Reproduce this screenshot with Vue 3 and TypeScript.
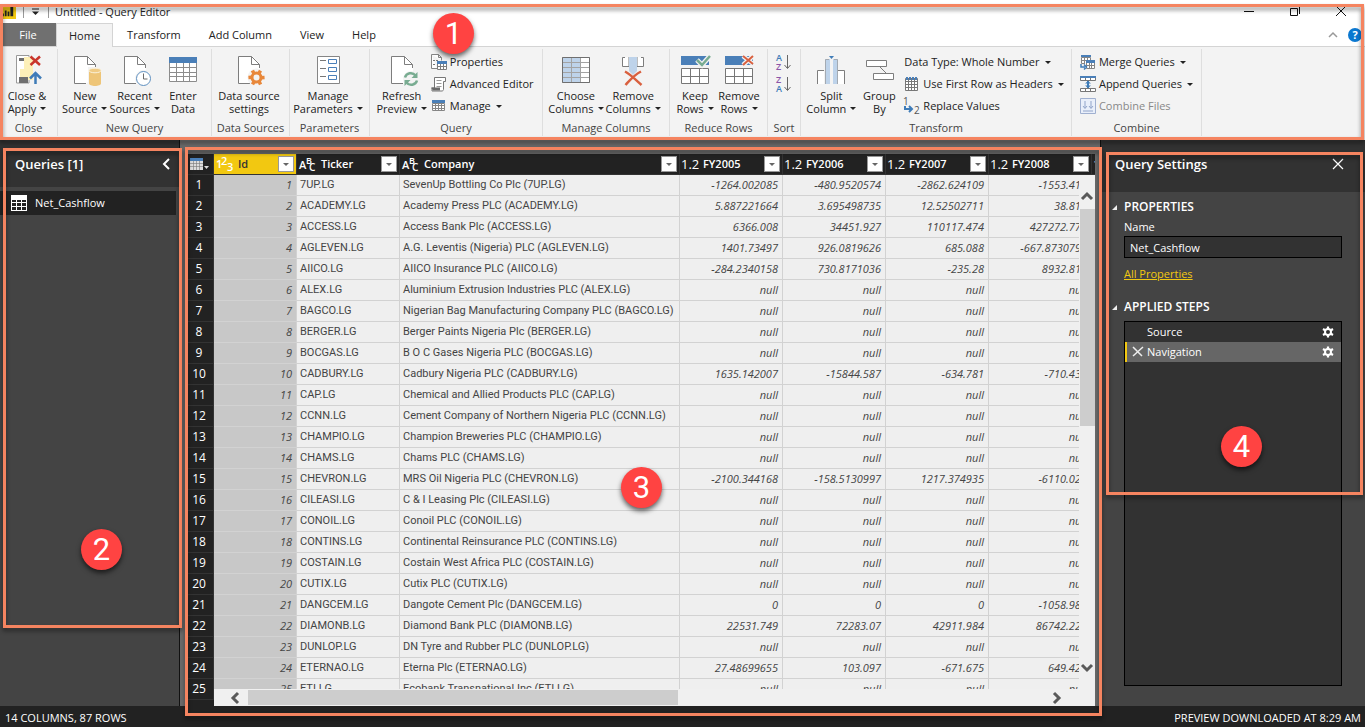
<script setup lang="ts">
import { ref } from 'vue'

interface Command { icon: string; lines: string[]; menu?: boolean; disabled?: boolean }
interface Group { key: string; label: string; large: Command[]; small?: Command[] }

const doc = '<path d="M18.5 2.5H5.5V29.5H17M18.5 2.5L26.5 10.5V14M18.5 2.5V10.5H26.5" fill="none" stroke="#7d7d7d"/>'
const docFill = '<path d="M5 2H19L27 10V20L17 30H5Z" fill="#fff"/>'
const cells = (x: number, y: number, w: number, h: number, cols: number, rows: number, color: string): string => {
  let d = `M${x} ${y}h${w}v${h}h${-w}z`
  for (let i = 1; i < cols; i++) d += `M${x + Math.round((w * i) / cols)} ${y}v${h}`
  for (let i = 1; i < rows; i++) d += `M${x} ${y + Math.round((h * i) / rows)}h${w}`
  return `<path d="${d}" fill="none" stroke="${color}"/>`
}

const icons: Record<string, string> = {
  close: '<path d="M5.5 1.5H18V29H5.5Z" fill="#fff" stroke="#999"/><path d="M13 3h9v23h-13v-11h4z" fill="#fdf0b8"/><path d="M8 4h5v3H8zM8 23h9v6H8z" fill="#6f6f6f"/><path d="M19.5 2.5L29 11M29 2.5L19.5 11" stroke="#c9352b" stroke-width="2.5" fill="none"/><path d="M24.5 30V20M19 24.5L24.5 19L30 24.5" stroke="#3f7cb8" stroke-width="2.5" fill="none"/>',
  newSource: docFill + doc + '<path d="M19 13h14v20H19z" fill="#f3f3f3"/><path d="M20 16.5v13c0 3.3 12 3.3 12 0v-13z" fill="#eec578"/><ellipse cx="26" cy="16.5" rx="6" ry="2.3" fill="#f0cb85" stroke="#fbf2dc"/>',
  recent: docFill + doc + '<circle cx="24.5" cy="24.5" r="8.5" fill="#f3f3f3"/><circle cx="24.5" cy="24.5" r="7" fill="#fff" stroke="#5f90c0"/><path d="M24.5 19.5V25H28.5" fill="none" stroke="#6b6b6b"/>',
  enter: '<path d="M2 8h28v20H2z" fill="#fff"/>' + cells(2.5, 8.5, 27, 19, 4, 4, '#8c8c8c') + '<path d="M2 3h28v6H2z" fill="#4a7fb8"/>',
  sourceSettings: docFill + doc + '<circle cx="23.5" cy="23.5" r="9" fill="#f3f3f3"/><g stroke="#e8873a" fill="none"><circle cx="23.5" cy="23.5" r="4.5" stroke-width="3"/><path d="M23.5 19v-3.5M23.5 28v3.5M19.5 21.5l-3-2M27.5 21.5l3-2M19.5 25.5l-3 2M27.5 25.5l3 2" stroke-width="3.5" transform="rotate(30 23.5 23.5)"/></g>',
  params: '<path d="M5.5 2.5h22v27h-22z" fill="#fff" stroke="#858585"/><path d="M8 6.5h6M8 14.5h6M8 22.5h6" stroke="#777"/><path d="M16.5 5.5h8v4h-8zM16.5 13.5h8v4h-8zM16.5 21.5h8v4h-8z" fill="#fff" stroke="#4a7fb8"/>',
  refresh: docFill + doc + '<circle cx="25" cy="25" r="8" fill="#f3f3f3"/><g fill="none" stroke="#78ac91" stroke-width="2.5"><path d="M19 23.5A6 6 0 0 1 29.5 21.5M31 26.5A6 6 0 0 1 20.5 28.5"/></g><path d="M31.5 18v6h-6zM18.5 32v-6h6z" fill="#78ac91"/>',
  choose: '<path d="M2 3h28v26H2z" fill="#fff"/><path d="M3 4h18v24H3z" fill="#bed3ea"/>' + cells(2.5, 3.5, 27, 25, 3, 5, '#a3a3a3') + '<path d="M2.5 3.5h27v25h-27z" fill="none" stroke="#6f6f6f"/>',
  removeCols: '<path d="M8 3.500H5.500V12.500H12V3M24 3.500H26.500V12.500H20V3" stroke="#7d7d7d" fill="#fff"/><path d="M12 3h8v14l-4 4-4-4z" fill="#bed3ea"/><path d="M8 17.5C13 20 19 26 24.5 31M24 17.5C17 21 13 26 8.5 31" stroke="#d9603f" stroke-width="2.5" fill="none"/>',
  keepRows: '<path d="M2 2h28v9H2z" fill="#4a7fb8"/><path d="M2.5 14.5h27v15h-27z" fill="#fff"/>' + cells(2.5, 14.5, 27, 15, 3, 2, '#777') + '<path d="M18 6l5 5 8-9" stroke="#f3f3f3" stroke-width="5" fill="none"/><path d="M18 6l5 5 8-9" stroke="#78ac91" stroke-width="2.5" fill="none"/>',
  removeRows: '<path d="M2 2h28v9H2z" fill="#4a7fb8"/><path d="M2.5 14.5h27v15h-27z" fill="#fff"/>' + cells(2.5, 14.5, 27, 15, 3, 2, '#777') + '<path d="M20 2l10 8M30 2l-10 9" stroke="#f3f3f3" stroke-width="4.5"/><path d="M20 2l10 8M30 2l-10 9" stroke="#d9603f" stroke-width="2"/>',
  split: '<path d="M2.5 30V16.5H9V30M29.5 30V16.500H23V30" fill="#fff"/><path d="M2.5 30V16.5H9M29.5 30V16.5H23" fill="none" stroke="#7d7d7d"/><path d="M10 5h5v25h-5zM18 5h5v25h-5z" fill="#bed3ea"/><path d="M10.5 30V5.5H14M22.5 30V5.5H19" fill="none" stroke="#a3aab2"/><path d="M14 2h5l-2.5 3z" fill="#3f7cb8"/>',
  group: '<path d="M3.5 6.5h20v6h-20zM10.5 19.5h20v6h-20z" fill="#fff" stroke="#7d7d7d"/><path d="M17 13l6 6" stroke="#7d7d7d"/>',
  properties: '<path d="M.5 .5h7l3 3v3M.5 .5v14H6M7.5 .5v3h3" fill="#fff" stroke="#858585"/><path d="M2 6.5h2M2 10.5h2M5 6.5h2" stroke="#777"/><path d="M6 8h10v8H6z" fill="#fff"/>' + cells(6.5, 9.5, 9, 6, 3, 2, '#7d7d7d') + '<path d="M6 7h10v3H6z" fill="#4a7fb8"/>',
  advanced: '<path d="M3.5 1.5h11v4h-2v8c0 1-1 1.5-1.5 1.5h-10v-3h2.5z" fill="#fff" stroke="#777"/><path d="M5.5 4.5h5M5.5 7.5h5M5.5 10.5h5" stroke="#999"/><path d="M0 11.5h9v3H2z" fill="#6a6a6a"/>',
  table: '<path d="M1 2h13v11H1z" fill="#fff"/>' + cells(1.5, 5.5, 12, 7, 4, 3, '#858585') + '<path d="M1 2h13v3H1z" fill="#4a7fb8"/>',
  headers: '<path d="M1.5 2.5h12v12h-12z" fill="#fff"/>' + cells(1.5, 2.5, 12, 12, 4, 4, '#777') + '<path d="M2 1h2v3H2zM5 1h2v3H5zM8 1h2v3H8zM11 1h2v3h-2z" fill="#4a7fb8"/>',
  replace: '<text x="-1" y="7" font-size="10" fill="#555">1</text><text x="10" y="16" font-size="10" fill="#555">2</text><path d="M1 8v3h6M5 8l3 3-3 3" fill="none" stroke="#3f7cb8" stroke-width="2"/>',
  merge: '<path d="M1 2h10v8H1z" fill="#fff"/>' + cells(1.5, 3.5, 9, 6, 3, 2, '#858585') + '<path d="M1 1h10v2H1z" fill="#4a7fb8"/><path d="M5 7h10v8H5z" fill="#fff"/>' + cells(6.5, 8.5, 8, 6, 3, 2, '#858585') + '<path d="M6 6h9v3H6z" fill="#4a7fb8"/><path d="M1 10v3h4M4 10.5l2.5 2.5L4 15.5" fill="none" stroke="#3f7cb8" stroke-width="1.5"/>',
  append: '<path d="M.5 .5h15v4H.5zM.5 12.5h15v3H.5z" fill="#fff" stroke="#777"/><path d="M5.5 1v3M10.5 1v3M5.5 13v2M10.5 13v2" stroke="#777"/><path d="M0 0h16v2H0z" fill="#4a7fb8"/><path d="M8 5v7" stroke="#3f7cb8" stroke-width="2"/><path d="M5 7.5h6L8 5zM5 9.5h6L8 12z" fill="#3f7cb8"/>',
  combine: '<path d="M.5 .5h15v15H.5z" fill="#e9effa" stroke="#a0b0d0"/><path d="M5 3v7M11 3v7M3 8l2 2.5L7 8M9 8l2 2.5L13 8M3 13h10" fill="none" stroke="#91a4c9"/>',
  az: '<text x="0" y="7" font-size="9" font-weight="600" fill="#3f7cb8">A</text><text x="0" y="16" font-size="9" font-weight="600" fill="#8b55a8">Z</text><path d="M11.5 1v13M8.5 11l3 3.5 3-3.5" fill="none" stroke="#666"/>',
  za: '<text x="0" y="7" font-size="9" font-weight="600" fill="#8b55a8">Z</text><text x="0" y="16" font-size="9" font-weight="600" fill="#3f7cb8">A</text><path d="M11.5 1v13M8.5 11l3 3.5 3-3.5" fill="none" stroke="#666"/>',
}

const groups: Group[] = [
  { key: 'close', label: 'Close', large: [{ icon: 'close', lines: ['Close &', 'Apply'], menu: true }] },
  { key: 'new', label: 'New Query', large: [
    { icon: 'newSource', lines: ['New', 'Source'], menu: true },
    { icon: 'recent', lines: ['Recent', 'Sources'], menu: true },
    { icon: 'enter', lines: ['Enter', 'Data'] } ] },
  { key: 'sources', label: 'Data Sources', large: [{ icon: 'sourceSettings', lines: ['Data source', 'settings'] }] },
  { key: 'params', label: 'Parameters', large: [{ icon: 'params', lines: ['Manage', 'Parameters'], menu: true }] },
  { key: 'query', label: 'Query', large: [{ icon: 'refresh', lines: ['Refresh', 'Preview'], menu: true }], small: [
    { icon: 'properties', lines: ['Properties'] },
    { icon: 'advanced', lines: ['Advanced Editor'] },
    { icon: 'table', lines: ['Manage'], menu: true } ] },
  { key: 'columns', label: 'Manage Columns', large: [
    { icon: 'choose', lines: ['Choose', 'Columns'], menu: true },
    { icon: 'removeCols', lines: ['Remove', 'Columns'], menu: true } ] },
  { key: 'rows', label: 'Reduce Rows', large: [
    { icon: 'keepRows', lines: ['Keep', 'Rows'], menu: true },
    { icon: 'removeRows', lines: ['Remove', 'Rows'], menu: true } ] },
  { key: 'sort', label: 'Sort', large: [], small: [{ icon: 'az', lines: [] }, { icon: 'za', lines: [] }] },
  { key: 'transform', label: 'Transform', large: [
    { icon: 'split', lines: ['Split', 'Column'], menu: true },
    { icon: 'group', lines: ['Group', 'By'] } ], small: [
    { icon: '', lines: ['Data Type: Whole Number'], menu: true },
    { icon: 'headers', lines: ['Use First Row as Headers'], menu: true },
    { icon: 'replace', lines: ['Replace Values'] } ] },
  { key: 'combine', label: 'Combine', large: [], small: [
    { icon: 'merge', lines: ['Merge Queries'], menu: true },
    { icon: 'append', lines: ['Append Queries'], menu: true },
    { icon: 'combine', lines: ['Combine Files'], disabled: true } ] },
]

const tabs = ['File', 'Home', 'Transform', 'Add Column', 'View', 'Help']
const activeTab = ref('Home')

const columns = [
  { name: 'Id', type: 'int' }, { name: 'Ticker', type: 'text' }, { name: 'Company', type: 'text' },
  { name: 'FY2005', type: 'num' }, { name: 'FY2006', type: 'num' }, { name: 'FY2007', type: 'num' },
  { name: 'FY2008', type: 'num' },
]

const n = 'null'
const rows: string[][] = [
  ['7UP.LG', 'SevenUp Bottling Co Plc (7UP.LG)', '-1264.002085', '-480.9520574', '-2862.624109', '-1553.413'],
  ['ACADEMY.LG', 'Academy Press PLC (ACADEMY.LG)', '5.887221664', '3.695498735', '12.52502711', '38.814'],
  ['ACCESS.LG', 'Access Bank Plc (ACCESS.LG)', '6366.008', '34451.927', '110117.474', '427272.771'],
  ['AGLEVEN.LG', 'A.G. Leventis (Nigeria) PLC (AGLEVEN.LG)', '1401.73497', '926.0819626', '685.088', '-667.8730791'],
  ['AIICO.LG', 'AIICO Insurance PLC (AIICO.LG)', '-284.2340158', '730.8171036', '-235.28', '8932.815'],
  ['ALEX.LG', 'Aluminium Extrusion Industries PLC (ALEX.LG)', n, n, n, n],
  ['BAGCO.LG', 'Nigerian Bag Manufacturing Company PLC (BAGCO.LG)', n, n, n, n],
  ['BERGER.LG', 'Berger Paints Nigeria Plc (BERGER.LG)', n, n, n, n],
  ['BOCGAS.LG', 'B O C Gases Nigeria PLC (BOCGAS.LG)', n, n, n, n],
  ['CADBURY.LG', 'Cadbury Nigeria PLC (CADBURY.LG)', '1635.142007', '-15844.587', '-634.781', '-710.435'],
  ['CAP.LG', 'Chemical and Allied Products PLC (CAP.LG)', n, n, n, n],
  ['CCNN.LG', 'Cement Company of Northern Nigeria PLC (CCNN.LG)', n, n, n, n],
  ['CHAMPIO.LG', 'Champion Breweries PLC (CHAMPIO.LG)', n, n, n, n],
  ['CHAMS.LG', 'Chams PLC (CHAMS.LG)', n, n, n, n],
  ['CHEVRON.LG', 'MRS Oil Nigeria PLC (CHEVRON.LG)', '-2100.344168', '-158.5130997', '1217.374935', '-6110.021'],
  ['CILEASI.LG', 'C & I Leasing Plc (CILEASI.LG)', n, n, n, n],
  ['CONOIL.LG', 'Conoil PLC (CONOIL.LG)', n, n, n, n],
  ['CONTINS.LG', 'Continental Reinsurance PLC (CONTINS.LG)', n, n, n, n],
  ['COSTAIN.LG', 'Costain West Africa PLC (COSTAIN.LG)', n, n, n, n],
  ['CUTIX.LG', 'Cutix PLC (CUTIX.LG)', n, n, n, n],
  ['DANGCEM.LG', 'Dangote Cement Plc (DANGCEM.LG)', '0', '0', '0', '-1058.982'],
  ['DIAMONB.LG', 'Diamond Bank PLC (DIAMONB.LG)', '22531.749', '72283.07', '42911.984', '86742.221'],
  ['DUNLOP.LG', 'DN Tyre and Rubber PLC (DUNLOP.LG)', n, n, n, n],
  ['ETERNAO.LG', 'Eterna Plc (ETERNAO.LG)', '27.48699655', '103.097', '-671.675', '649.421'],
  ['ETI.LG', 'Ecobank Transnational Inc (ETI.LG)', n, n, n, n],
]

const queryName = ref('Net_Cashflow')
const steps = ['Source', 'Navigation']
const activeStep = ref('Navigation')
const gear = '<circle cx="6" cy="6" r="3" fill="none" stroke="#fff" stroke-width="2"/><path d="M6 3V0.5M6 9v2.5M3.5 4.5L1 3M8.5 4.5L11 3M3.5 7.5L1 9M8.5 7.5L11 9" stroke="#fff" stroke-width="2.2"/>'
</script>

<template>
  <div class="app">
    <header class="top">
      <div class="titlebar">
        <svg class="logo" viewBox="0 0 16 16"><path d="M0 0h16v16H0z" fill="#f2c811" /><path d="M1 10h2v3H1zM4 7h2v6H4zM7 8h2v5H7zM10 3h3v10h-3z" fill="#222" /></svg>
        <span class="bar"></span>
        <button class="qat" aria-label="Customize toolbar"><svg viewBox="0 0 8 8"><path d="M0 1h7" stroke="#222" /><path d="M0 3.5h7L3.5 7z" fill="#222" /></svg></button>
        <span class="bar"></span>
        <h1>Untitled - Query Editor</h1>
        <div class="window-buttons">
          <button aria-label="Minimize"><svg viewBox="0 0 12 12"><path d="M1 6.5h10" stroke="#111" /></svg></button>
          <button aria-label="Restore"><svg viewBox="0 0 12 12"><path d="M1.5 3.5h7v7h-7zM3 1.5h7.5V9" fill="none" stroke="#111" /></svg></button>
          <button aria-label="Close"><svg viewBox="0 0 12 12"><path d="M1 1l10 10M11 1L1 11" stroke="#111" /></svg></button>
        </div>
      </div>
      <nav class="tabs">
        <button v-for="t in tabs" :key="t" :class="{ file: t === 'File', active: t === activeTab }" @click="activeTab = t">{{ t }}</button>
        <span class="tab-fill"></span>
        <button class="collapse" aria-label="Collapse ribbon"><svg viewBox="0 0 10 6"><path d="M1 5l4-4 4 4" fill="none" stroke="#999" stroke-width="1.5" /></svg></button>
        <button class="help" aria-label="Help">?</button>
      </nav>
      <div class="ribbon">
        <section v-for="g in groups" :key="g.key" class="group" :class="'group--' + g.key">
          <div class="group-body">
            <button v-for="c in g.large" :key="c.icon" class="large">
              <svg viewBox="0 0 32 32" v-html="icons[c.icon]"></svg>
              <span>{{ c.lines[0] }}</span>
              <span>{{ c.lines[1] }}<i v-if="c.menu" class="caret"></i></span>
            </button>
            <div v-if="g.small" class="small-list">
              <button v-for="(c, i) in g.small" :key="i" class="small" :disabled="c.disabled" :aria-label="c.lines.length ? undefined : 'Sort'">
                <svg v-if="c.icon" viewBox="0 0 16 16" v-html="icons[c.icon]"></svg>
                <span v-if="c.lines.length">{{ c.lines[0] }}</span><i v-if="c.menu" class="caret"></i>
              </button>
            </div>
          </div>
          <h2>{{ g.label }}</h2>
        </section>
      </div>
    </header>

    <main class="work">
      <aside class="queries">
        <div class="pane-head">
          <h2>Queries [1]</h2>
          <button aria-label="Collapse queries"><svg viewBox="0 0 8 12"><path d="M7 1L2 6l5 5" fill="none" stroke="#fff" stroke-width="2" /></svg></button>
        </div>
        <button class="query">
          <svg viewBox="0 0 16 16"><path d="M0 0h16v16H0z" fill="#fff" /><path d="M1 5h4v2H1zM6 5h4v2H6zM11 5h4v2h-4zM1 8h4v3H1zM6 8h4v3H6zM11 8h4v3h-4zM1 12h4v3H1zM6 12h4v3H6zM11 12h4v3h-4z" fill="#222" /></svg>
          Net_Cashflow
        </button>
      </aside>

      <section class="preview">
        <div class="grid">
          <table>
            <colgroup><col class="c-row" /><col class="c-id" /><col class="c-num" /><col class="c-company" /><col v-for="i in 5" :key="i" class="c-num" /></colgroup>
            <thead>
              <tr>
                <th><button class="corner" aria-label="Table options"><svg viewBox="0 0 20 12"><path d="M0 0h13v12H0z" fill="#ddd" /><path d="M0 0h13v3H0z" fill="#4a7fb8" /><path d="M3.5 3v9M6.5 3v9M9.5 3v9M0 5.5h13M0 8.5h13" stroke="#777" stroke-width=".6" /><path d="M14 8h5l-2.5 3z" fill="#ddd" /></svg></button></th>
                <th v-for="c in columns" :key="c.name" :class="{ selected: c.name === 'Id' }">
                  <div class="head">
                    <svg v-if="c.type === 'int'" class="type" viewBox="0 0 18 16"><text x="0" y="12" font-size="11">1</text><text x="5" y="9" font-size="11">2</text><text x="11" y="15" font-size="11">3</text></svg>
                    <svg v-else-if="c.type === 'text'" class="type" viewBox="0 0 18 16"><text x="0" y="13" font-size="11">A</text><text x="7" y="8" font-size="9">B</text><text x="10" y="15" font-size="10">C</text></svg>
                    <span v-else class="decimal">1.2</span>
                    <span class="name">{{ c.name }}</span>
                    <button class="filter" :aria-label="'Filter ' + c.name"></button>
                  </div>
                </th>
                <th><div class="head"><span class="decimal">1.2</span></div></th>
              </tr>
            </thead>
            <tbody>
              <tr v-for="(r, i) in rows" :key="i">
                <th>{{ i + 1 }}</th>
                <td class="id">{{ i + 1 }}</td>
                <td>{{ r[0] }}</td>
                <td>{{ r[1] }}</td>
                <td v-for="k in 4" :key="k" class="value">{{ r[k + 1] }}</td>
                <td></td>
              </tr>
            </tbody>
          </table>
          <div class="vscroll">
            <svg viewBox="0 0 12 8"><path d="M1 7l5-5 5 5" fill="none" stroke="#5a5a5a" stroke-width="3" /></svg>
            <span class="thumb"></span>
            <svg viewBox="0 0 12 8"><path d="M1 1l5 5 5-5" fill="none" stroke="#5a5a5a" stroke-width="3" /></svg>
          </div>
          <div class="hscroll">
            <svg viewBox="0 0 10 12"><path d="M8 1L3 6l5 5" fill="none" stroke="#5a5a5a" stroke-width="3" /></svg>
            <span class="thumb"></span>
            <svg viewBox="0 0 10 12"><path d="M2 1l5 5-5 5" fill="none" stroke="#5a5a5a" stroke-width="3" /></svg>
          </div>
        </div>
      </section>

      <aside class="settings">
        <div class="pane-head">
          <h2>Query Settings</h2>
          <button aria-label="Close settings"><svg viewBox="0 0 12 12"><path d="M1 1l10 10M11 1L1 11" stroke="#fff" stroke-width="1.2" /></svg></button>
        </div>
        <div class="settings-body">
          <h3>PROPERTIES</h3>
          <label for="query-name">Name</label>
          <input id="query-name" v-model="queryName" type="text" />
          <a href="#">All Properties</a>
          <h3>APPLIED STEPS</h3>
          <ul>
            <li v-for="s in steps" :key="s" :class="{ active: s === activeStep }">
              <button class="delete" :aria-label="'Delete ' + s"><svg viewBox="0 0 12 12"><path d="M1 1l9 9M11 1L1 10" stroke="#eee" stroke-width="1.5" /></svg></button>
              <button class="step" @click="activeStep = s">{{ s }}</button>
              <button class="gear" :aria-label="'Settings for ' + s"><svg viewBox="0 0 12 12" v-html="gear"></svg></button>
            </li>
          </ul>
        </div>
      </aside>
    </main>

    <footer><span>14 COLUMNS, 87 ROWS</span><span>PREVIEW DOWNLOADED AT 8:29 AM</span></footer>

    <div class="frame frame-1"></div>
    <div class="frame frame-2"></div>
    <div class="frame frame-3"></div>
    <div class="frame frame-4"></div>
    <span class="pin pin-1">1</span>
    <span class="pin pin-2">2</span>
    <span class="pin pin-3">3</span>
    <span class="pin pin-4">4</span>
  </div>
</template>

<style>
body { margin: 0; }
</style>

<style scoped>
* { box-sizing: border-box; }
.app { position: relative; display: flex; flex-direction: column; height: 100vh; overflow: hidden; background: #2b2b2b; color: #222; font: 11px/14px "Open Sans", "Noto Sans", sans-serif; }
button { margin: 0; padding: 0; border: 0; background: none; color: inherit; font: inherit; }
h1, h2, h3, ul { margin: 0; padding: 0; font: inherit; list-style: none; }
svg { display: block; flex: none; overflow: visible; }

.top { flex: none; background: #fff; }
.titlebar { display: flex; align-items: center; height: 23px; padding-left: 1px; }
.logo { width: 15px; height: 15px; }
.bar { width: 1px; height: 12px; margin: 0 7px; background: #999; }
.bar + h1 { margin-left: -1px; font-size: 11px; }
.qat { width: 10px; margin: 0; }
.qat svg { width: 8px; height: 8px; margin-left: 1px; }
.window-buttons { display: flex; margin-right: 1px; margin-left: auto; }
.window-buttons button { display: flex; justify-content: center; width: 46px; padding-bottom: 2px; }
.window-buttons svg { width: 12px; height: 12px; }
.tabs { display: flex; align-items: stretch; height: 24px; border-bottom: 1px solid #d4d4d4; }
.tabs > button { padding: 0 14px; }
.tabs > .file { width: 56px; background: #707070; color: #fff; }
.tabs > .active { height: 24px; border: solid #d4d4d4; border-width: 1px 1px 0; background: #f3f3f3; padding: 0 12px; }
.tab-fill { flex: 1; }
.tabs > .collapse { width: 10px; padding: 0; }
.collapse svg { width: 10px; height: 6px; }
.tabs > .help { align-self: center; width: 14px; height: 14px; margin: 0 3px 0 10px; padding: 0; border-radius: 50%; background: #0b78d0; color: #fff; font-weight: 700; }

.ribbon { display: flex; height: 93px; padding-top: 2px; background: #f3f3f3; }
.group { display: flex; flex: none; flex-direction: column; height: 87px; border-right: 1px solid #dedede; }
.group-body { display: flex; flex: 1; justify-content: center; padding: 5px 3px 0 0; }
.group h2 { height: 15px; color: #444; text-align: center; white-space: nowrap; }
.group--close { width: 58px; }
.group--new { width: 154px; }
.group--sources { width: 78px; }
.group--params { width: 80px; }
.group--query { width: 173px; }
.group--columns { width: 127px; }
.group--rows { width: 98px; }
.group--sort { width: 33px; }
.group--transform { width: 271px; }
.group--combine { width: 130px; }
.large { display: flex; flex-direction: column; align-items: center; min-width: 44px; padding: 0 1px; line-height: 13px; white-space: nowrap; }
.large svg { width: 32px; height: 32px; margin-bottom: 3px; }
.caret { display: inline-block; margin-left: 4px; border: 3px solid transparent; border-top-color: #222; border-bottom: 0; vertical-align: 3px; }
.small-list { display: flex; flex-direction: column; margin-left: 3px; }
.small { display: flex; align-items: center; height: 22px; margin-top: -3px; margin-bottom: 3px; white-space: nowrap; }
.small svg { width: 16px; height: 16px; margin-right: 3px; }
.small .caret { margin-left: 5px; }
.small:disabled { color: #888; }
.group--sort .small svg { margin-right: 0; }

.work { display: flex; flex: 1; min-height: 0; color: #fff; }
.pane-head { display: flex; justify-content: space-between; align-items: center; height: 47px; background: #323232; }
.pane-head h2 { font-size: 13px; font-weight: 600; line-height: 18px; }
.queries { flex: none; width: 180px; border-right: 1px solid #111; background: #444; }
.queries .pane-head { padding: 0 9px 0 15px; }
.queries .pane-head svg { width: 8px; height: 12px; }
.query { display: flex; align-items: center; gap: 8px; width: 176px; height: 24px; margin-top: 4px; padding-left: 11px; background: #222; }
.query svg { width: 16px; height: 16px; }

.preview { flex: 1; min-width: 0; padding: 14px 5px 0 8px; background: #6a6a6a; }
.grid { position: relative; height: 100%; overflow: hidden; background: #222; }
table { width: 1007px; table-layout: fixed; border-collapse: separate; border-spacing: 0; color: #444; font: 11px/14px Roboto, "Open Sans", sans-serif; }
.c-row { width: 26px; }
.c-id { width: 83px; }
.c-num { width: 103px; }
.c-company { width: 280px; }
th, td { height: 21px; padding: 0 4px 0 3px; border: solid #d2d2d2; border-width: 0 1px 1px 0; background: #efefef; text-align: left; white-space: nowrap; overflow: hidden; }
th, td.id, td.value { font-family: "Open Sans", "Noto Sans", sans-serif; }
th { padding: 0; border-color: #333; background: #222; color: #fff; font-weight: 400; text-align: center; }
tbody th { padding-right: 3px; font-size: 12px; }
td.id { background: #c8c8c8; font-style: italic; text-align: right; }
td.value { font-style: italic; text-align: right; }
th.selected { background: #f2c811; }
.head { display: flex; align-items: center; padding: 0 2px; height: 20px; }
.type { width: 18px; height: 16px; fill: #fff; font-weight: 600; }
.decimal { width: 18px; margin-left: -1px; font-size: 13px; }
.name { flex: 1; margin-left: 4px; font-weight: 600; text-align: left; }
.selected .name { color: #333; }
.filter { display: grid; place-items: center; width: 16px; height: 16px; border: 1px solid #999; background: #fff; }
.filter::after { content: ""; border: 3px solid transparent; border-top-color: #666; border-bottom: 0; }
.corner { display: block; }
.corner svg { width: 20px; height: 12px; margin-left: 2px; }
.vscroll { position: absolute; top: 21px; right: 0; bottom: 17px; display: flex; flex-direction: column; align-items: center; width: 16px; padding: 17px 0; background: #f0f0f0; }
.vscroll svg { width: 12px; height: 8px; }
.vscroll .thumb { width: 15px; height: 217px; margin: 9px 0 auto; background: #cdcdcd; }
.hscroll { position: absolute; right: 0; bottom: 0; left: 26px; display: flex; align-items: center; height: 17px; padding: 0 33px 0 16px; background: #f0f0f0; }
.hscroll svg { width: 10px; height: 12px; }
.hscroll .thumb { width: 430px; height: 15px; margin: 0 auto 0 8px; background: #cdcdcd; }

.settings { display: flex; flex: none; flex-direction: column; width: 265px; border-left: 1px solid #111; background: #444; }
.settings .pane-head { height: 52px; padding: 0 21px 4px 14px; }
.settings .pane-head svg { width: 12px; height: 12px; }
.settings-body { display: flex; flex: 1; flex-direction: column; padding: 6px 23px 20px; }
h3 { display: flex; align-items: center; height: 18px; margin-left: -12px; font-size: 12px; font-weight: 600; }
h3::before { content: ""; margin-right: 7px; border: solid transparent; border-width: 0 0 5px 5px; border-bottom-color: #eee; }
label { margin-top: 4px; }
input { height: 22px; margin-top: 2px; padding: 0 5px; border: 1px solid #000; background: #323232; color: #fff; font: inherit; }
a { align-self: flex-start; margin: 9px 0 17px; color: #f2c811; line-height: 14px; text-decoration: underline; }
ul { flex: 1; margin-top: 5px; border: 1px solid #000; background: #323232; }
li { display: flex; align-items: center; height: 20px; padding: 0 7px 0 5px; border-left: 2px solid transparent; }
li.active { border-color: #f2c811; background: #666; }
li svg { width: 12px; height: 12px; }
.delete { visibility: hidden; }
.active .delete { visibility: visible; }
.step { flex: 1; margin-left: 3px; text-align: left; }

footer { display: flex; flex: none; justify-content: space-between; align-items: center; height: 21px; padding: 2px 4px 0 5px; background: #222; color: #fff; }

.frame { position: absolute; border: 3px solid #f58460; filter: drop-shadow(0 3px 2px rgba(0, 0, 0, .45)); pointer-events: none; }
.frame-1 { top: 4px; right: 1px; left: 0; height: 136px; }
.frame-2 { top: 148px; left: 3px; width: 179px; height: 480px; }
.frame-3 { top: 147px; right: 263px; bottom: 11px; left: 185px; }
.frame-4 { top: 152px; right: 2px; width: 257px; height: 343px; }
.pin { position: absolute; display: grid; place-items: center; width: 41px; height: 41px; border-radius: 50%; background: #ff4342; box-shadow: 0 3px 5px rgba(0, 0, 0, .6); color: #fff; font: 31px/41px Roboto, sans-serif; }
.pin-1 { top: 13px; left: 433px; }
.pin-2 { top: 529px; left: 81px; }
.pin-3 { top: 467px; left: 621px; }
.pin-4 { top: 426px; right: 103px; }
</style>
